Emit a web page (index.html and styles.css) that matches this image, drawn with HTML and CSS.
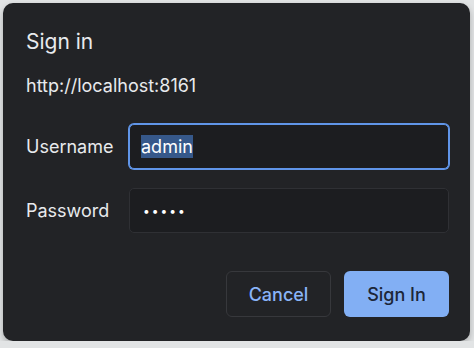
FILE: index.html
```html
<!DOCTYPE html>
<html lang="en">
<head>
  <meta charset="UTF-8" />
  <title>Sign in</title>
  <link rel="stylesheet" href="styles.css">
</head>
<body>
<div class="dialog">
  <h2 class="title">Sign in</h2>
  <div class="origin">http://localhost:8161</div>
  <div class="form">
    <label class="label">Username</label>
    <div class="field focused"><span class="selected">admin</span></div>
    <label class="label">Password</label>
    <div class="field"><span class="dots">•••••</span></div>
  </div>
  <div class="actions">
    <button class="btn cancel">Cancel</button>
    <button class="btn primary">Sign In</button>
  </div>
</div>
</body>
</html>
```

FILE: styles.css
```css
body {
  margin: 0;
  background: #e2e4e5;
  font-family: Inter, "Liberation Sans", sans-serif;
}
.dialog {
  width: 467px;
  box-sizing: border-box;
  margin: 3px 0 0 3px;
  padding: 26px 21px 24px 23px;
  background: #222326;
  border-radius: 10px;
  box-shadow: 0 3px 6px rgba(0,0,0,0.25);
  color: #e8eaed;
}
.title {
  margin: 0;
  font-size: 21px;
  font-weight: 400;
  line-height: 25px;
}
.origin {
  margin-top: 20px;
  font-size: 18px;
  line-height: 23px;
}
.form {
  display: grid;
  grid-template-columns: 103px 320px;
  row-gap: 19px;
  align-items: center;
  margin-top: 27px;
}
.label {
  font-size: 18px;
}
.field {
  height: 45px;
  box-sizing: border-box;
  border: 1px solid #2f3034;
  border-radius: 5px;
  background: #1c1d20;
  padding: 0 11px;
  display: flex;
  align-items: center;
  font-size: 18px;
  color: #ffffff;
}
.field.focused {
  border-color: #6095e8;
  box-shadow: 0 0 0 1px #6095e8;
}
.selected {
  background: #36588a;
  padding: 1px 0;
}
.dots {
  font-size: 12px;
  letter-spacing: 2px;
  padding-left: 2px;
}
.actions {
  display: flex;
  justify-content: flex-end;
  gap: 13px;
  margin-top: 38px;
}
.btn {
  width: 105px;
  height: 46px;
  border-radius: 6px;
  font-family: Inter, "Liberation Sans", sans-serif;
  font-size: 18px;
  font-weight: 500;
  cursor: pointer;
}
.cancel {
  background: transparent;
  border: 1px solid #37383c;
  color: #8ab4f8;
}
.primary {
  background: #82aff4;
  border: none;
  color: #1c2638;
}
```
